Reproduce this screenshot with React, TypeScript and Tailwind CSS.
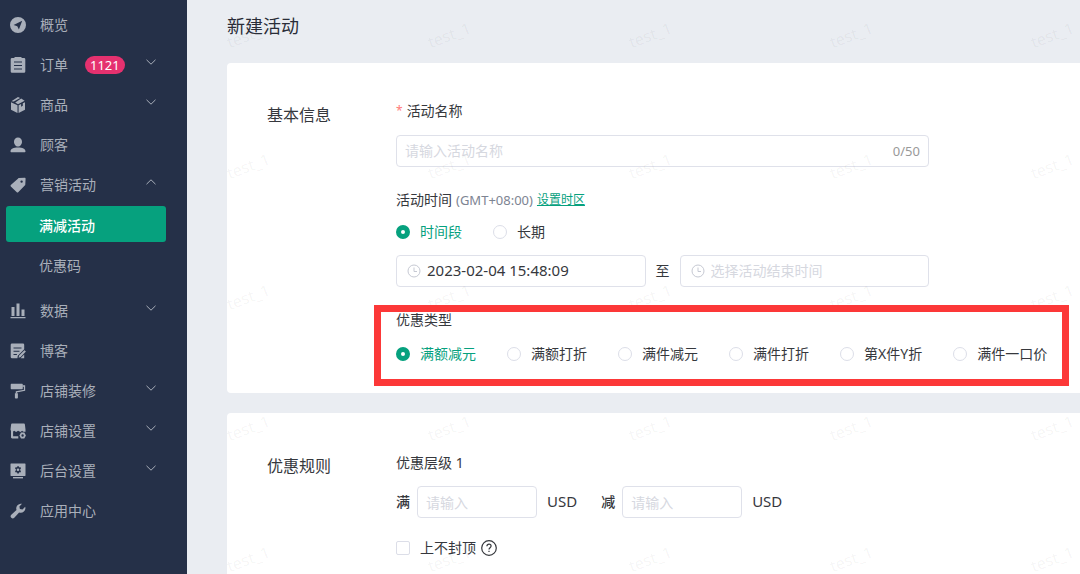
import { useState } from "react";
import type { ReactNode } from "react";

const icons: Record<string, ReactNode> = {
  overview: (
    <path
      fillRule="evenodd"
      d="M8 0a8 8 0 1 0 0 16A8 8 0 0 0 8 0Zm4.2 3.8L8.9 12.6 7.3 9.2 3.6 7.9l8.6-4.1Z"
    />
  ),
  orders: (
    <path
      fillRule="evenodd"
      d="M4.500 0h7v1H14a1.300 1.300 0 0 1 1.300 1.300v12.200A1.300 1.300 0 0 1 14 15.800H2A1.300 1.300 0 0 1 .7 14.500V2.300A1.300 1.300 0 0 1 2 1h2.500V0ZM4 4.500v1.100h8V4.500H4Zm0 3.500v1.100h8V8H4Zm0 3.500v1.100h8v-1.100H4Z"
    />
  ),
  products: (
    <>
      <path d="M7.500 8.300v7.700L1 12.700V5.200l6.500 3.100ZM8.600 8.300v7.700l6.400-3.300V5.200l-2.200 1v2.600l-1.700.9V7.100L8.600 8.300Z" />
      <path d="m8 0 2.100 1-6.300 3.500L1.400 4.200 8 0Zm3.200 1.500 3.400 2.200-6.600 3.500-2.800-1.800 6-3.900Z" />
    </>
  ),
  customers: (
    <path d="M8 .5c2.300 0 4 1.800 4 4.200S10.300 9.500 8 9.500 4 7.100 4 4.700 5.700.5 8 .5ZM.5 14.200c0-2.300 3-3.700 7.500-3.700s7.500 1.400 7.500 3.700c0 .6-.4 1-1 1h-13c-.6 0-1-.4-1-1Z" />
  ),
  marketing: (
    <path
      fillRule="evenodd"
      d="M8.900 1.100 14.600.8c.6 0 1 .4 1 1l-.3 5.700c0 .3-.1.500-.3.700l-6.800 7.100c-.4.400-1 .4-1.400 0L.8 9.500c-.4-.4-.4-1 0-1.400l7.400-6.700c.2-.2.400-.3.700-.3Zm2.700 2.300a1.200 1.200 0 1 0 0 2.400 1.200 1.200 0 0 0 0-2.400Z"
    />
  ),
  data: <path d="M1.500 4h3v9h-3zM6.500.500h3V13h-3zM11.500 6.500h3V13h-3zM.500 14h15v1.300H.500z" />,
  blog: (
    <>
      <path
        fillRule="evenodd"
        d="M2 .5h11a1.200 1.200 0 0 1 1.200 1.200v4.500L7.800 12.700 7.400 15.300H2a1.300 1.300 0 0 1-1.300-1.300V1.800A1.300 1.300 0 0 1 2 .5Zm1.500 4v1.100h8V4.500h-8Zm0 3.200v1.100h6V7.700h-6Zm0 3.200V12h3.400v-1.100H3.500Z"
      />
      <path d="m14.400 7.200 1.500 1.400-5.200 5.500-2.100.6.500-2.100 5.300-5.400ZM10.500 15.300l3.700-3.900v3.900h-3.700Z" />
    </>
  ),
  decorate: (
    <>
      <path d="M1.700.8h10.100c.6 0 1 .4 1 1v3.400c0 .6-.4 1-1 1H1.700c-.6 0-1-.4-1-1V1.800c0-.6.4-1 1-1ZM4.900 10.200h3v4.200c0 .6-.5 1-1 1h-1c-.5 0-1-.4-1-1v-4.200Z" />
      <path d="M12.500 3h2v4.300L6.400 8.800v1.800" fill="none" stroke="currentColor" strokeWidth="1.300" />
    </>
  ),
  store: (
    <>
      <path
        fillRule="evenodd"
        d="M2 .6h12c.5 0 .8.300.9.800l.6 5v2.300h-2.100l-1.300-.9-1.700 1.100-2.300-1.100-2 1.100-1.900-1.100-1.100.7v4.700h5.200v2.300H2.200c-.7 0-1.200-.5-1.200-1.200V8L.500 6.400l.6-5c.1-.5.4-.8.900-.8Z"
      />
      <path
        fillRule="evenodd"
        d="M11 9.600h3.300l1.600 2.900-1.600 2.900H11l-1.600-2.900L11 9.600Zm1.600 1.700a1.200 1.200 0 1 0 0 2.400 1.200 1.200 0 0 0 0-2.400Z"
      />
    </>
  ),
  backend: (
    <>
      <path
        fillRule="evenodd"
        d="M1 .5h14c.3 0 .5.200.5.500v11.500c0 .3-.2.500-.5.500H1c-.3 0-.5-.2-.5-.5V1c0-.3.200-.5.500-.5ZM7.300 3.300 7 4.400l-1.200-.3L5 5.500l.9.8v1l-.9.900.8 1.400L7 9.300l.3 1.100h1.500l.3-1.100 1.200.3.700-1.400-.8-.9v-1l.8-.8-.7-1.400-1.200.3-.3-1.100H7.300Z"
      />
      <circle cx="8" cy="6.800" r="1.300" />
      <path d="M3 14h10v1.400H3z" />
    </>
  ),
  apps: (
    <path d="M15.200 3.800a4.700 4.700 0 0 1-6.100 5.700l-4.800 5.200a2.100 2.100 0 0 1-3-3l5.200-4.800A4.700 4.700 0 0 1 12 .8L9.400 3.500l.5 2.600 2.600.5 2.700-2.800Z" />
  ),
};

type MenuItem = {
  label: string;
  icon: string;
  badge?: string;
  arrow?: "up" | "down";
  children?: string[];
};

const menu: MenuItem[] = [
  { label: "概览", icon: "overview" },
  { label: "订单", icon: "orders", badge: "1121", arrow: "down" },
  { label: "商品", icon: "products", arrow: "down" },
  { label: "顾客", icon: "customers" },
  { label: "营销活动", icon: "marketing", arrow: "up", children: ["满减活动", "优惠码"] },
  { label: "数据", icon: "data", arrow: "down" },
  { label: "博客", icon: "blog" },
  { label: "店铺装修", icon: "decorate", arrow: "down" },
  { label: "店铺设置", icon: "store", arrow: "down" },
  { label: "后台设置", icon: "backend", arrow: "down" },
  { label: "应用中心", icon: "apps" },
];

const discountTypes = ["满额减元", "满额打折", "满件减元", "满件打折", "第X件Y折", "满件一口价"];

const Chevron = ({ up }: { up: boolean }) => (
  <svg viewBox="0 0 10 6" className="mb-1.5 ml-auto h-1.5 w-2.5" fill="none" stroke="currentColor">
    <path d={up ? "M.500 5.200 5 .8l4.500 4.400" : "M.500.8 5 5.200 9.500.8"} />
  </svg>
);

const Clock = () => (
  <svg viewBox="0 0 14 14" className="h-3.5 w-3.5 shrink-0 text-[#c6c9d3]" fill="none" stroke="currentColor">
    <circle cx="7" cy="7" r="6" />
    <path d="M7 3.500v4h3" />
  </svg>
);

const Sidebar = () => (
  <aside className="w-[187px] shrink-0 bg-[#253048] text-sm text-[#a9afba]">
    <nav className="pt-[5px]">
      <ul>
        {menu.map((item) => (
          <li key={item.label}>
            <button type="button" className="flex h-10 w-full items-center pr-[31px] pl-2.5">
              <svg viewBox="0 0 16 16" className="mr-3.5 h-4 w-4 shrink-0" fill="currentColor">
                {icons[item.icon]}
              </svg>
              {item.label}
              {item.badge && (
                <span className="ml-[17px] rounded-full bg-[#e5316f] px-[5px] text-[13px] leading-[18px] text-white">
                  {item.badge}
                </span>
              )}
              {item.arrow && <Chevron up={item.arrow === "up"} />}
            </button>
            {item.children && (
              <ul className="mb-[5px] pt-px pr-[21px] pl-1.5">
                {item.children.map((child, i) => (
                  <li key={child}>
                    <a
                      href="#"
                      className={
                        i === 0
                          ? "mb-1 flex h-9 items-center rounded-[3px] bg-[#06a17e] pt-1 pl-[33px] font-medium text-white"
                          : "flex h-10 items-center pl-[33px]"
                      }
                    >
                      {child}
                    </a>
                  </li>
                ))}
              </ul>
            )}
          </li>
        ))}
      </ul>
    </nav>
  </aside>
);

type RadioGroupProps = {
  name: string;
  options: string[];
  value: string;
  onChange: (value: string) => void;
};

const RadioGroup = ({ name, options, value, onChange }: RadioGroupProps) => (
  <div className="flex gap-[31px]">
    {options.map((option) => (
      <label
        key={option}
        className="flex h-6 items-center gap-2.5 whitespace-nowrap has-checked:text-[#06a17e]"
      >
        <input
          type="radio"
          name={name}
          value={option}
          checked={value === option}
          onChange={() => onChange(option)}
          className="h-3.5 w-3.5 appearance-none rounded-full border border-[#dcdee8] bg-white checked:border-5 checked:border-[#06a17e]"
        />
        {option}
      </label>
    ))}
  </div>
);

const Watermark = () => (
  <div
    aria-hidden="true"
    className="pointer-events-none absolute inset-0 grid auto-rows-[131px] grid-cols-[repeat(5,201px)] overflow-hidden pt-[23px] pl-[39px] text-base text-black/5"
  >
    {Array.from({ length: 25 }, (_, i) => (
      <span key={i} className="h-6 w-11 -rotate-20">
        test_1
      </span>
    ))}
  </div>
);

const App = () => {
  const [name, setName] = useState("");
  const [period, setPeriod] = useState("时间段");
  const [start, setStart] = useState("2023-02-04 15:48:09");
  const [end, setEnd] = useState("");
  const [type, setType] = useState("满额减元");

  return (
    <div className="flex min-h-screen overflow-hidden font-['Noto_Sans','Noto_Sans_CJK_SC',sans-serif] text-sm text-[#36383d]">
      <Sidebar />

      <main className="relative flex min-w-0 flex-1 flex-col bg-[#eaedf2] pl-10">
        <h1 className="flex h-[63px] items-center pb-3 text-lg text-[#2a2d38]">新建活动</h1>

        <section className="flex rounded-l-[4px] bg-white pt-9 pb-[27px] pl-10">
          <h2 className="w-[129px] shrink-0 pt-1 text-base leading-6">基本信息</h2>
          <div className="min-w-0 flex-1">
            <div className="max-w-[533px]">
              <label htmlFor="name" className="flex h-6 items-center gap-1">
                <span className="text-xs text-[#ff7a7a]">*</span>活动名称
              </label>
              <div className="mt-3 flex h-8 items-center rounded-[4px] border border-[#dfe1ea] px-2">
                <input
                  id="name"
                  maxLength={50}
                  value={name}
                  onChange={(e) => setName(e.target.value)}
                  placeholder="请输入活动名称"
                  className="min-w-0 flex-1 outline-none placeholder:text-[#d6d8df]"
                />
                <span className="text-[13px] text-[#999]">{name.length}/50</span>
              </div>

              <div className="mt-[21px] flex h-6 items-center gap-1">
                活动时间
                <span className="text-[13px] text-[#7d8492]">(GMT+08:00)</span>
                <a href="#" className="text-xs text-[#06a17e] underline">
                  设置时区
                </a>
              </div>
              <div className="mt-2">
                <RadioGroup name="period" options={["时间段", "长期"]} value={period} onChange={setPeriod} />
              </div>

              <div className="mt-[11px] flex items-center gap-2.5">
                <div className="flex h-8 min-w-0 flex-1 items-center gap-1.5 rounded-[4px] border border-[#dfe1ea] px-2.5">
                  <Clock />
                  <input
                    aria-label="开始时间"
                    value={start}
                    onChange={(e) => setStart(e.target.value)}
                    className="min-w-0 flex-1 text-[15px] outline-none"
                  />
                </div>
                <span>至</span>
                <div className="flex h-8 min-w-0 flex-1 items-center gap-1.5 rounded-[4px] border border-[#dfe1ea] px-2.5">
                  <Clock />
                  <input
                    aria-label="结束时间"
                    value={end}
                    onChange={(e) => setEnd(e.target.value)}
                    placeholder="选择活动结束时间"
                    className="min-w-0 flex-1 outline-none placeholder:text-[#d6d8df]"
                  />
                </div>
              </div>
            </div>

            <div className="relative mt-[21px] w-fit">
              <div className="mb-2.5 flex h-6 items-center">优惠类型</div>
              <RadioGroup name="type" options={discountTypes} value={type} onChange={setType} />
              <div className="pointer-events-none absolute -inset-x-[22px] -top-[3px] -bottom-5 z-10 border-7 border-[#fc3838]" />
            </div>
          </div>
        </section>

        <section className="mt-5 flex flex-1 rounded-tl-[4px] bg-white pt-[38px] pl-10">
          <h2 className="w-[129px] shrink-0 pt-[3px] text-base leading-6">优惠规则</h2>
          <div>
            <div className="flex h-6 items-center">优惠层级 1</div>
            <div className="mt-[11px] flex gap-6">
              {["满", "减"].map((label) => (
                <div key={label} className="flex items-center">
                  <label htmlFor={label} className="mr-[7px] font-medium">
                    {label}
                  </label>
                  <input
                    id={label}
                    placeholder="请输入"
                    className="h-8 w-[120px] rounded-[4px] border border-[#dfe1ea] px-2 outline-none placeholder:text-[#d6d8df]"
                  />
                  <span className="ml-2.5 text-[15px]">USD</span>
                </div>
              ))}
            </div>
            <div className="mt-[18px] flex h-6 items-center gap-[5px]">
              <label className="flex items-center gap-2.5">
                <input
                  type="checkbox"
                  className="h-3.5 w-3.5 appearance-none rounded-[2px] border border-[#dcdee8] bg-white checked:bg-[#06a17e]"
                />
                上不封顶
              </label>
              <button type="button" aria-label="帮助">
                <svg viewBox="0 0 16 16" className="h-4 w-4" fill="none" stroke="currentColor" strokeWidth="1.2">
                  <circle cx="8" cy="8" r="7.300" />
                  <path d="M5.900 6.300c0-1.300.9-2.100 2.100-2.100s2.100.8 2.100 1.900c0 1.600-2.100 1.700-2.100 3.400M8 10.700V12" />
                </svg>
              </button>
            </div>
          </div>
        </section>

        <Watermark />
      </main>
    </div>
  );
};

export default App;
